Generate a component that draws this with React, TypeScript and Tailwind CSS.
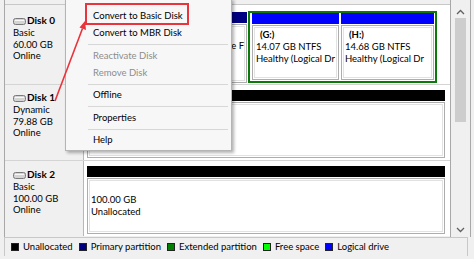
import React from "react";

type Part = {
  bar: string;
  width: string;
  label?: string;
  lines: string[];
};

function DiskIcon() {
  return (
    <svg width="13" height="7" viewBox="0 0 13 7" className="shrink-0 mr-[1px]">
      <rect x="0.5" y="0.5" width="12" height="6" rx="2" fill="#d4d4d4" stroke="#7a7a7a" />
      <rect x="2" y="2" width="9" height="1" fill="#f8f8f8" />
    </svg>
  );
}

function Partition({ bar, width, label, lines }: Part) {
  return (
    <div className={`flex flex-col ${width}`}>
      <div className={`h-[11px] shrink-0 ${bar}`} />
      <div className="flex-1 mt-[1px] border border-[#adadad] bg-white shadow-[inset_0_0_0_1px_#fff,inset_0_0_0_2px_#e2e2e2] pl-[3px] pt-[3px] leading-[12px] overflow-hidden whitespace-nowrap">
        <div className="h-[12px] font-bold pl-[4px]">{label}</div>
        {lines.map((l) => (
          <div key={l}>{l}</div>
        ))}
      </div>
    </div>
  );
}

function DiskLabel({ name, kind, size, pad }: { name: string; kind: string; size: string; pad: string }) {
  return (
    <div className={`w-[78px] shrink-0 pl-[8px] leading-[11.7px] ${pad}`}>
      <div className="flex items-center h-[12px] font-bold text-[10px]">
        <DiskIcon />
        {name}
      </div>
      <div>{kind}</div>
      <div>{size}</div>
      <div>Online</div>
    </div>
  );
}

const menu: { text: string; disabled?: boolean; sep?: boolean }[] = [
  { text: "Convert to Basic Disk" },
  { text: "Convert to MBR Disk" },
  { text: "", sep: true },
  { text: "Reactivate Disk", disabled: true },
  { text: "Remove Disk", disabled: true },
  { text: "", sep: true },
  { text: "Offline" },
  { text: "", sep: true },
  { text: "Properties" },
  { text: "", sep: true },
  { text: "Help" },
];

const legend = [
  { color: "bg-black", text: "Unallocated" },
  { color: "bg-[#000080]", text: "Primary partition" },
  { color: "bg-[#008000]", text: "Extended partition" },
  { color: "bg-[#00ff00]", text: "Free space" },
  { color: "bg-[#0000ff]", text: "Logical drive" },
];

export default function App() {
  return (
    <div className="relative w-[474px] h-[259px] overflow-hidden bg-[#f0f0f0] text-[9.5px] text-black font-['Lato',sans-serif]">
      <div className="flex h-[237px]">
        <div className="w-[4px] shrink-0" />
        {/* disk list */}
        <div className="flex flex-col w-[447px] border-l border-r border-[#a8a8a8]">
          <div className="h-[5px] shrink-0 border-b border-[#c8c8c8]" />

          {/* Disk 0 */}
          <div className="flex h-[80px] border-b border-[#d4d4d4]">
            <DiskLabel name="Disk 0" kind="Basic" size="60.00 GB" pad="pt-[10px]" />
            <div className="flex flex-1 gap-[1px] bg-white border-l border-[#b8b8b8] pl-[3px] pr-[5px] pt-[7px] pb-[1px]">
              <Partition bar="bg-[#000080]" width="w-[62px]" lines={[]} />
              <Partition bar="bg-[#000080]" width="w-[97px]" lines={["", "Healthy (Boot, Page F"]} />
              <div className="flex w-[189px] gap-[2px] -mt-[1px] border-2 border-[#0b7a0b] bg-white pl-[2px] pr-[1px] pb-[1px]">
                <Partition bar="bg-[#0000ff]" width="w-[87px]" label="(G:)" lines={["14.07 GB NTFS", "Healthy (Logical Dr"]} />
                <Partition bar="bg-[#0000ff]" width="flex-1" label="(H:)" lines={["14.68 GB NTFS", "Healthy (Logical Dr"]} />
              </div>
            </div>
          </div>

          {/* Disk 1 */}
          <div className="flex h-[76px] border-b border-[#d4d4d4]">
            <DiskLabel name="Disk 1" kind="Dynamic" size="79.88 GB" pad="pt-[7px]" />
            <div className="flex flex-1 bg-white border-l border-[#b8b8b8] pl-[3px] pr-[5px] pt-[5px] pb-[2px]">
              <Partition bar="bg-black" width="flex-1" lines={[]} />
            </div>
          </div>

          {/* Disk 2 */}
          <div className="flex h-[75px]">
            <DiskLabel name="Disk 2" kind="Basic" size="100.00 GB" pad="pt-[8px]" />
            <div className="flex flex-1 bg-white border-l border-[#b8b8b8] pl-[3px] pr-[5px] pt-[5px] pb-[2px]">
              <Partition bar="bg-black" width="flex-1" lines={["100.00 GB", "Unallocated"]} />
            </div>
          </div>
        </div>

        {/* scrollbar */}
        <div className="flex flex-col items-center w-[20px] border-r border-[#a8a8a8] pt-[9px]">
          <svg width="9" height="6" viewBox="0 0 9 6">
            <polyline points="1,5 4.5,1.5 8,5" fill="none" stroke="#606060" strokeWidth="1.3" />
          </svg>
          <div className="w-[11px] h-[104px] mt-[3px] bg-[#cdcdcd]" />
          <div className="flex-1" />
          <svg width="9" height="6" viewBox="0 0 9 6" className="mb-[4px]">
            <polyline points="1,1 4.5,4.5 8,1" fill="none" stroke="#606060" strokeWidth="1.3" />
          </svg>
        </div>
      </div>

      {/* legend */}
      <div className="ml-[4px] w-[464px] h-[19px] flex items-center gap-[6px] pl-[6px] border-l border-r border-t border-[#c8c8c8]">
        {legend.map((l) => (
          <div key={l.text} className="flex items-center gap-[4px] leading-[12px]">
            <div className={`w-[8px] h-[8px] border border-[#222] ${l.color}`} />
            <span>{l.text}</span>
          </div>
        ))}
      </div>

      {/* context menu */}
      <div className="absolute left-[65px] top-[-2px] w-[167px] border border-[#b4b4b4] bg-[#f7f7f7] pt-[9px] pb-[1px] shadow-[2px_2px_3px_rgba(0,0,0,0.3)]">
        {menu.map((m, i) =>
          m.sep ? (
            <div key={i} className="h-[5.5px] flex items-center ml-[22px] mr-[3px]">
              <div className="h-px w-full bg-[#d7d7d7]" />
            </div>
          ) : (
            <div
              key={i}
              className={`h-[17px] flex items-center pl-[27px] text-[9.5px] ${m.disabled ? "text-[#8d8d8d]" : "text-black"}`}
            >
              {m.text}
            </div>
          )
        )}
      </div>

      {/* annotation */}
      <div className="absolute left-[85px] top-[3px] w-[104px] h-[22px] border-2 border-[#e8343a]" />
      <svg className="absolute left-0 top-0" width="474" height="259" viewBox="0 0 474 259">
        <line x1="55" y1="101" x2="82.5" y2="28.5" stroke="#e8343a" strokeWidth="1.6" />
        <polygon points="85,21 86,30 79.5,27.5" fill="#e8343a" />
      </svg>
    </div>
  );
}
